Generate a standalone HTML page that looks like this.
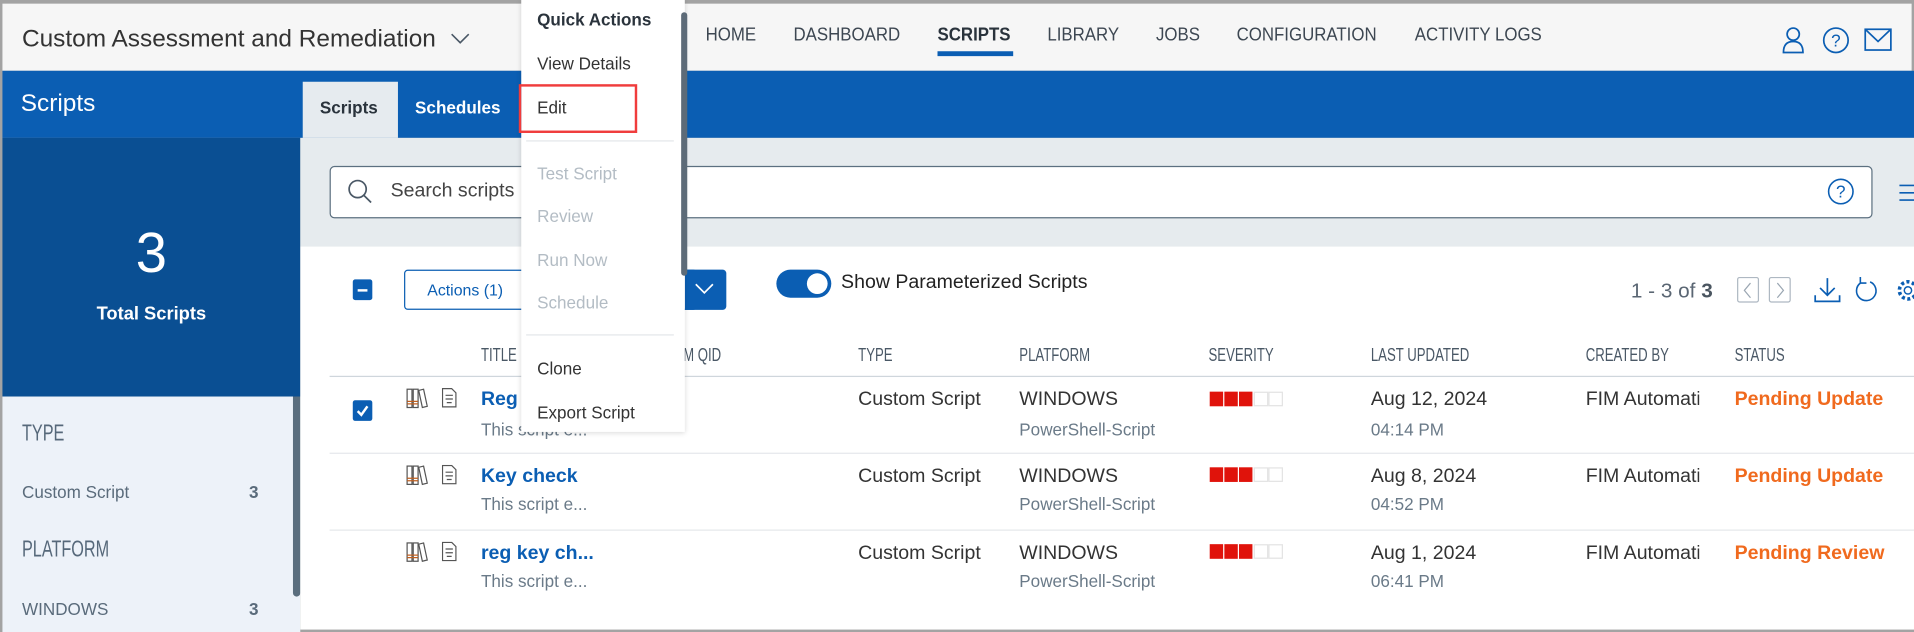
<!DOCTYPE html>
<html><head><meta charset="utf-8"><style>
*{box-sizing:border-box;margin:0;padding:0}
html,body{width:1914px;height:632px;overflow:hidden;background:#a3a3a3}
#w{position:absolute;left:0;top:0;width:1568px;height:518px;transform:scale(1.2207,1.2201);transform-origin:0 0;font-family:"Liberation Sans",sans-serif;background:#a3a3a3;overflow:hidden}
.a{position:absolute;white-space:nowrap}
.n{font-family:"Liberation Sans",sans-serif;transform:scaleX(0.92);transform-origin:0 0}
.c{transform:scaleX(0.7);transform-origin:0 0}
.hd{font-size:15px;color:#4a5866;top:283px;transform:scaleX(0.72);transform-origin:0 0}
.t{color:#0b5eb3;font-weight:bold;font-size:16px}
.s{color:#6a7a88;font-size:14px}
.d{color:#333;font-size:16px}
.o{color:#f06a1e;font-weight:bold;font-size:16px}
.mi{position:absolute;left:440px;font-size:14px;color:#333}
.mg{color:#b3bcc4}
.sev{position:absolute;left:991px;width:73px;height:12px;display:flex}
.sev i{display:block;width:11px;height:12px;background:#e0130b;margin-right:1px}
.sev b{display:block;width:12px;height:12px;border:1px solid #e3e3e3;margin-right:0}
</style></head><body><div id="w">
<div class="a" style="left:2px;top:3px;width:1564px;height:55px;background:#f6f6f6"></div>
<div class="a" style="left:18px;top:21px;font-size:20px;color:#333">Custom Assessment and Remediation</div>
<svg class="a" style="left:369px;top:27px" width="16" height="10"><path d="M1 1L8 8L15 1" stroke="#4a5866" stroke-width="1.3" fill="none"/></svg>
<div class="a n" style="left:578px;top:20px;font-size:15px;color:#3d4752">HOME</div>
<div class="a n" style="left:650px;top:20px;font-size:15px;color:#3d4752">DASHBOARD</div>
<div class="a n" style="left:768px;top:20px;font-size:15px;color:#2a333c;font-weight:bold">SCRIPTS</div>
<div class="a" style="left:768px;top:42px;width:62px;height:4px;background:#0b5eb3"></div>
<div class="a n" style="left:858px;top:20px;font-size:15px;color:#3d4752">LIBRARY</div>
<div class="a n" style="left:947px;top:20px;font-size:15px;color:#3d4752">JOBS</div>
<div class="a n" style="left:1013px;top:20px;font-size:15px;color:#3d4752">CONFIGURATION</div>
<div class="a n" style="left:1159px;top:20px;font-size:15px;color:#3d4752">ACTIVITY LOGS</div>
<svg class="a" style="left:1458px;top:21px" width="22" height="24"><circle cx="11" cy="7" r="5" stroke="#0b5eb3" stroke-width="1.4" fill="none"/><path d="M3 22Q3 13 11 13Q19 13 19 22Z" stroke="#0b5eb3" stroke-width="1.4" fill="none"/></svg>
<svg class="a" style="left:1492px;top:21px" width="24" height="24"><circle cx="12" cy="12" r="10" stroke="#0b5eb3" stroke-width="1.4" fill="none"/><text x="12" y="17" text-anchor="middle" font-size="14" fill="#0b5eb3" font-family="Liberation Sans">?</text></svg>
<svg class="a" style="left:1527px;top:22px" width="24" height="22"><rect x="1" y="2" width="21" height="17" stroke="#0b5eb3" stroke-width="1.4" fill="none"/><path d="M1 2L11.5 12L22 2" stroke="#0b5eb3" stroke-width="1.4" fill="none"/></svg>
<div class="a" style="left:2px;top:58px;width:1566px;height:55px;background:#0b5eb3"></div>
<div class="a" style="left:17px;top:74px;font-size:20px;color:#fff">Scripts</div>
<div class="a" style="left:248px;top:67px;width:78px;height:46px;background:#e6ebef"></div>
<div class="a" style="left:262px;top:80px;font-size:14px;font-weight:bold;color:#2a333c">Scripts</div>
<div class="a" style="left:340px;top:80px;font-size:14px;font-weight:bold;color:#fff">Schedules</div>
<div class="a" style="left:2px;top:113px;width:244px;height:212px;background:#0a4f93"></div>
<div class="a" style="left:2px;top:180px;width:244px;text-align:center;font-size:46px;color:#fff">3</div>
<div class="a" style="left:2px;top:249px;width:244px;text-align:center;font-size:15px;font-weight:bold;color:#fff">Total Scripts</div>
<div class="a" style="left:2px;top:325px;width:244px;height:193px;background:#edf2f9"></div>
<div class="a" style="left:240px;top:325px;width:6px;height:164px;background:#5a6e7e;border-radius:0 0 3px 3px"></div>
<div class="a c" style="left:18px;top:345px;font-size:19px;color:#56687a">TYPE</div>
<div class="a" style="left:18px;top:395px;font-size:14px;color:#5a6b7b">Custom Script</div>
<div class="a" style="left:204px;top:395px;font-size:14px;color:#5a6b7b;font-weight:bold">3</div>
<div class="a c" style="left:18px;top:440px;font-size:19px;color:#56687a">PLATFORM</div>
<div class="a" style="left:18px;top:491px;font-size:14px;color:#5a6b7b">WINDOWS</div>
<div class="a" style="left:204px;top:491px;font-size:14px;color:#5a6b7b;font-weight:bold">3</div>
<div class="a" style="left:246px;top:113px;width:1322px;height:89px;background:#e6ebee"></div>
<div class="a" style="left:270px;top:136px;width:1264px;height:43px;background:#fff;border:1px solid #5c7080;border-radius:4px"></div>
<svg class="a" style="left:284px;top:146px" width="22" height="22"><circle cx="9" cy="9" r="7" stroke="#4a5866" stroke-width="1.4" fill="none"/><path d="M14 14L20 20" stroke="#4a5866" stroke-width="1.4"/></svg>
<div class="a" style="left:320px;top:148px;font-size:16px;color:#444">Search scripts</div>
<svg class="a" style="left:1496px;top:145px" width="24" height="24"><circle cx="12" cy="12" r="10" stroke="#0b5eb3" stroke-width="1.3" fill="none"/><text x="12" y="17" text-anchor="middle" font-size="14" fill="#0b5eb3" font-family="Liberation Sans">?</text></svg>
<svg class="a" style="left:1554px;top:150px" width="14" height="16"><path d="M2 2H14M2 8H14M2 14H14" stroke="#0b5eb3" stroke-width="1.3"/></svg>
<div class="a" style="left:246px;top:202px;width:1322px;height:314px;background:#fff"></div>
<div class="a" style="left:289px;top:229px;width:16px;height:17px;background:#0b5eb3;border-radius:2px"></div>
<div class="a" style="left:293px;top:237px;width:8px;height:2px;background:#fff"></div>
<div class="a" style="left:331px;top:221px;width:240px;height:33px;border:1px solid #0b5eb3;border-radius:3px;background:#fff"></div>
<div class="a" style="left:350px;top:230px;font-size:13px;color:#0b5eb3">Actions (1)</div>
<div class="a" style="left:561px;top:221px;width:34px;height:33px;background:#0b5eb3;border-radius:0 3px 3px 0"></div>
<svg class="a" style="left:569px;top:232px" width="16" height="10"><path d="M1 1L8 8L15 1" stroke="#fff" stroke-width="1.4" fill="none"/></svg>
<div class="a" style="left:636px;top:221px;width:45px;height:23px;background:#0b5eb3;border-radius:12px"></div>
<div class="a" style="left:661px;top:224px;width:17px;height:17px;background:#fff;border-radius:50%"></div>
<div class="a" style="left:689px;top:223px;font-size:16px;color:#222">Show Parameterized Scripts</div>
<div class="a" style="left:1336px;top:229px;font-size:17px;color:#5a6673">1 - 3 of <b style="color:#4a5560">3</b></div>
<div class="a" style="left:1423px;top:227px;width:18px;height:21px;border:1px solid #aeb8c2;border-radius:2px"></div>
<svg class="a" style="left:1427px;top:231px" width="10" height="14"><path d="M7 1L2 7L7 13" stroke="#9aa6b2" fill="none"/></svg>
<div class="a" style="left:1449px;top:227px;width:18px;height:21px;border:1px solid #aeb8c2;border-radius:2px"></div>
<svg class="a" style="left:1453px;top:231px" width="10" height="14"><path d="M3 1L8 7L3 13" stroke="#9aa6b2" fill="none"/></svg>
<svg class="a" style="left:1485px;top:226px" width="24" height="24"><path d="M12 2V16M6 10L12 16L18 10M2 16V21H22V16" stroke="#0b5eb3" stroke-width="1.4" fill="none"/></svg>
<svg class="a" style="left:1518px;top:226px" width="22" height="24"><path d="M14 5A8 8 0 1 1 6 6M6 1V6H11" stroke="#0b5eb3" stroke-width="1.3" fill="none"/></svg>
<svg class="a" style="left:1551px;top:226px" width="17" height="24"><circle cx="12" cy="12" r="7" stroke="#0b5eb3" stroke-width="3" stroke-dasharray="2.5 2" fill="none"/><circle cx="12" cy="12" r="5.5" fill="#fff"/><circle cx="12" cy="12" r="3" stroke="#0b5eb3" stroke-width="1.2" fill="none"/></svg>
<div class="a hd" style="left:394px">TITLE</div>
<div class="a hd" style="left:522px">CUSTOM QID</div>
<div class="a hd" style="left:703px">TYPE</div>
<div class="a hd" style="left:835px">PLATFORM</div>
<div class="a hd" style="left:990px">SEVERITY</div>
<div class="a hd" style="left:1123px">LAST UPDATED</div>
<div class="a hd" style="left:1299px">CREATED BY</div>
<div class="a hd" style="left:1421px">STATUS</div>
<div class="a" style="left:270px;top:308px;width:1298px;height:1px;background:#cfd6dc"></div>
<div class="a" style="left:270px;top:371px;width:1298px;height:1px;background:#e5e8eb"></div>
<div class="a" style="left:270px;top:434px;width:1298px;height:1px;background:#e5e8eb"></div>
<div class="a" style="left:289px;top:328px;width:16px;height:17px;background:#0b5eb3;border-radius:2px"></div>
<svg class="a" style="left:291px;top:331px" width="12" height="11"><path d="M2 6L5 9L10 2" stroke="#fff" stroke-width="2" fill="none"/></svg>
<svg class="a" style="left:333px;top:318px" width="18" height="17"><g stroke="#555" fill="none" stroke-width="1"><rect x="0.5" y="1" width="4" height="15"/><rect x="5.5" y="1" width="4" height="15"/><path d="M10 2L14 1L17 15L13 16Z"/><path d="M0.5 11H9.5M0.5 13H9.5" stroke="#c06020"/></g></svg>
<svg class="a" style="left:362px;top:318px" width="12" height="16"><path d="M0.5 0.5H8L11.5 4V15.5H0.5Z M3 6H9M3 9H9M4 12H8" stroke="#555" fill="none" stroke-width="1"/></svg>
<div class="a t" style="left:394px;top:319px">Reg</div>
<div class="a s" style="left:394px;top:344px">This script e...</div>
<div class="a d" style="left:703px;top:319px">Custom Script</div>
<div class="a d" style="left:835px;top:319px">WINDOWS</div>
<div class="a s" style="left:835px;top:344px">PowerShell-Script</div>
<div class="sev" style="top:321px"><i></i><i></i><i></i><b></b><b></b></div>
<div class="a d" style="left:1123px;top:319px">Aug 12, 2024</div>
<div class="a s" style="left:1123px;top:344px">04:14 PM</div>
<div class="a d" style="left:1299px;top:319px;width:93px;overflow:hidden">FIM Automatic</div>
<div class="a o" style="left:1421px;top:319px">Pending Update</div>
<svg class="a" style="left:333px;top:381px" width="18" height="17"><g stroke="#555" fill="none" stroke-width="1"><rect x="0.5" y="1" width="4" height="15"/><rect x="5.5" y="1" width="4" height="15"/><path d="M10 2L14 1L17 15L13 16Z"/><path d="M0.5 11H9.5M0.5 13H9.5" stroke="#c06020"/></g></svg>
<svg class="a" style="left:362px;top:381px" width="12" height="16"><path d="M0.5 0.5H8L11.5 4V15.5H0.5Z M3 6H9M3 9H9M4 12H8" stroke="#555" fill="none" stroke-width="1"/></svg>
<div class="a t" style="left:394px;top:382px">Key check</div>
<div class="a s" style="left:394px;top:405px">This script e...</div>
<div class="a d" style="left:703px;top:382px">Custom Script</div>
<div class="a d" style="left:835px;top:382px">WINDOWS</div>
<div class="a s" style="left:835px;top:405px">PowerShell-Script</div>
<div class="sev" style="top:383px"><i></i><i></i><i></i><b></b><b></b></div>
<div class="a d" style="left:1123px;top:382px">Aug 8, 2024</div>
<div class="a s" style="left:1123px;top:405px">04:52 PM</div>
<div class="a d" style="left:1299px;top:382px;width:93px;overflow:hidden">FIM Automatic</div>
<div class="a o" style="left:1421px;top:382px">Pending Update</div>
<svg class="a" style="left:333px;top:444px" width="18" height="17"><g stroke="#555" fill="none" stroke-width="1"><rect x="0.5" y="1" width="4" height="15"/><rect x="5.5" y="1" width="4" height="15"/><path d="M10 2L14 1L17 15L13 16Z"/><path d="M0.5 11H9.5M0.5 13H9.5" stroke="#c06020"/></g></svg>
<svg class="a" style="left:362px;top:444px" width="12" height="16"><path d="M0.5 0.5H8L11.5 4V15.5H0.5Z M3 6H9M3 9H9M4 12H8" stroke="#555" fill="none" stroke-width="1"/></svg>
<div class="a t" style="left:394px;top:445px">reg key ch...</div>
<div class="a s" style="left:394px;top:468px">This script e...</div>
<div class="a d" style="left:703px;top:445px">Custom Script</div>
<div class="a d" style="left:835px;top:445px">WINDOWS</div>
<div class="a s" style="left:835px;top:468px">PowerShell-Script</div>
<div class="sev" style="top:446px"><i></i><i></i><i></i><b></b><b></b></div>
<div class="a d" style="left:1123px;top:445px">Aug 1, 2024</div>
<div class="a s" style="left:1123px;top:468px">06:41 PM</div>
<div class="a d" style="left:1299px;top:445px;width:93px;overflow:hidden">FIM Automatic</div>
<div class="a o" style="left:1421px;top:445px">Pending Review</div>
<div class="a" style="left:427px;top:0;width:134px;height:354px;background:#fff;box-shadow:0 1px 4px rgba(0,0,0,.15)"></div>
<div class="a" style="left:558px;top:10px;width:5px;height:216px;background:#5d6b78;border-radius:3px"></div>
<div class="mi" style="top:8px;font-weight:bold;color:#2a333c">Quick Actions</div>
<div class="mi" style="top:44px">View Details</div>
<div class="a" style="left:425px;top:69px;width:97px;height:40px;border:2px solid #f03c3c"></div>
<div class="mi" style="top:80px">Edit</div>
<div class="a" style="left:431px;top:115px;width:121px;height:1px;background:#e3e6e9"></div>
<div class="mi mg" style="top:134px">Test Script</div>
<div class="mi mg" style="top:169px">Review</div>
<div class="mi mg" style="top:205px">Run Now</div>
<div class="mi mg" style="top:240px">Schedule</div>
<div class="a" style="left:431px;top:274px;width:121px;height:1px;background:#e3e6e9"></div>
<div class="mi" style="top:294px">Clone</div>
<div class="mi" style="top:330px">Export Script</div>
</div></body></html>
